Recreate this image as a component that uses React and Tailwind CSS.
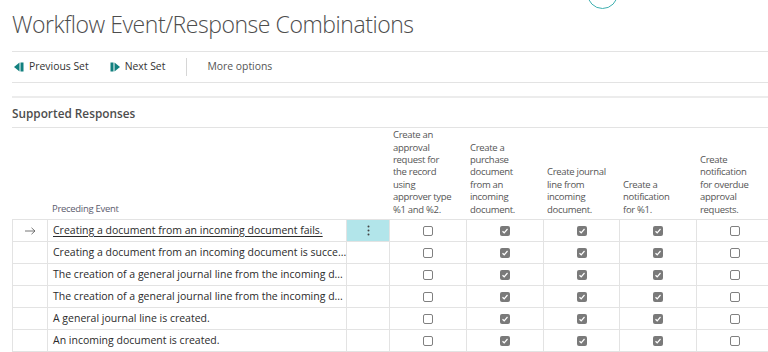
import React from "react";

const FONT = { fontFamily: '"Open Sans", "Noto Sans", sans-serif' };

function Check({ on }) {
  if (on) {
    return (
      <span className="inline-flex w-[10px] h-[10px] rounded-[2px] bg-[#7a7a7a] items-center justify-center">
        <svg width="8" height="8" viewBox="0 0 8 8">
          <path d="M1.5 4.2 L3.2 5.8 L6.5 2" fill="none" stroke="#ffffff" strokeWidth="1.2" />
        </svg>
      </span>
    );
  }
  return <span className="inline-block w-[10px] h-[10px] rounded-[2px] border border-[#808080] bg-white" />;
}

const rows = [
  "Creating a document from an incoming document fails.",
  "Creating a document from an incoming document is succe...",
  "The creation of a general journal line from the incoming d...",
  "The creation of a general journal line from the incoming d...",
  "A general journal line is created.",
  "An incoming document is created.",
];

const heads = [
  ["Create an", "approval", "request for", "the record", "using", "approver type", "%1 and %2."],
  ["Create a", "purchase", "document", "from an", "incoming", "document."],
  ["Create journal", "line from", "incoming", "document."],
  ["Create a", "notification", "for %1."],
  ["Create", "notification", "for overdue", "approval", "requests."],
];

const checks = [false, true, true, true, false];
const GRID = "grid grid-cols-[35px_299px_43px_77px_77px_76px_77px_77px]";

export default function App() {
  return (
    <div className="w-[768px] h-[352px] overflow-hidden bg-white relative" style={FONT}>
      <div className="absolute left-[587px] top-[-22px] w-[31px] h-[31px] rounded-full border border-[#3fb0b0]" />
      <div className="h-[51px] pl-[12px] pt-[8px]">
        <h1 className="text-[23px] font-light text-[#4d4d4d] leading-[32px] tracking-[-0.45px]">
          Workflow Event/Response Combinations
        </h1>
      </div>
      <div className="ml-[12px] border-t border-b border-[#e3e3e3] h-[32px] flex items-center text-[10.4px]">
        <div className="flex items-center gap-[5px] pl-[2px] text-[#333333]">
          <svg width="10" height="10" viewBox="0 0 10 10">
            <polygon points="0,5 5.5,0.5 5.5,9.5" fill="#12807f" />
            <rect x="6.5" y="0.5" width="3" height="9" fill="#12807f" />
          </svg>
          <span>Previous Set</span>
        </div>
        <div className="flex items-center gap-[5px] ml-[21px] text-[#333333]">
          <svg width="10" height="10" viewBox="0 0 10 10">
            <rect x="0.5" y="0.5" width="3" height="9" fill="#12807f" />
            <polygon points="4.5,0.5 10,5 4.5,9.5" fill="#12807f" />
          </svg>
          <span>Next Set</span>
        </div>
        <div className="ml-[21px] w-px h-[18px] bg-[#d6d6d6]" />
        <span className="ml-[20px] text-[#555555]">More options</span>
      </div>
      <div className="ml-[12px] mt-[13px] border-t-2 border-[#ececec]">
        <div className="h-[30px] flex items-center border-b border-[#e3e3e3] text-[11.8px] font-semibold text-[#4d4d4d] pt-[2px]">
          Supported Responses
        </div>
        <div className={`${GRID} h-[92px] border-b border-[#e3e3e3] text-[9.5px] tracking-[-0.3px] leading-[12.4px] text-[#555555]`}>
          <div />
          <div className="flex items-end pl-[5px] pb-[4px] text-[#5c5c6e]">Preceding Event</div>
          <div />
          {heads.map((h, i) => (
            <div key={i} className="flex flex-col justify-end pl-[4px] pb-[3px]">
              {h.map((l, j) => (
                <div key={j} className="whitespace-nowrap">{l}</div>
              ))}
            </div>
          ))}
        </div>
        {rows.map((r, i) => (
          <div key={i} className={`${GRID} h-[22px] border-b border-[#e3e3e3] text-[10.5px] text-[#2b2b2b]`}>
            <div className="border-l border-[#e3e3e3] flex items-center justify-center">
              {i === 0 && (
                <svg width="11" height="8" viewBox="0 0 11 8">
                  <path d="M0 4 H10 M6.5 0.8 L10 4 L6.5 7.2" fill="none" stroke="#666666" strokeWidth="0.9" />
                </svg>
              )}
            </div>
            <div className="border-l border-[#e3e3e3] flex items-center pl-[5px] whitespace-nowrap overflow-hidden">
              <span className={i === 0 ? "underline underline-offset-2" : ""}>{r}</span>
            </div>
            <div className={`border-l border-[#e3e3e3] flex items-center justify-center ${i === 0 ? "bg-[#b2e5ea]" : ""}`}>
              {i === 0 && (
                <svg width="3" height="11" viewBox="0 0 3 11">
                  <circle cx="1.5" cy="1.5" r="1" fill="#444" />
                  <circle cx="1.5" cy="5.5" r="1" fill="#444" />
                  <circle cx="1.5" cy="9.5" r="1" fill="#444" />
                </svg>
              )}
            </div>
            {checks.map((c, j) => (
              <div key={j} className="border-l border-[#e3e3e3] flex items-center justify-center">
                <Check on={c} />
              </div>
            ))}
          </div>
        ))}
      </div>
    </div>
  );
}
